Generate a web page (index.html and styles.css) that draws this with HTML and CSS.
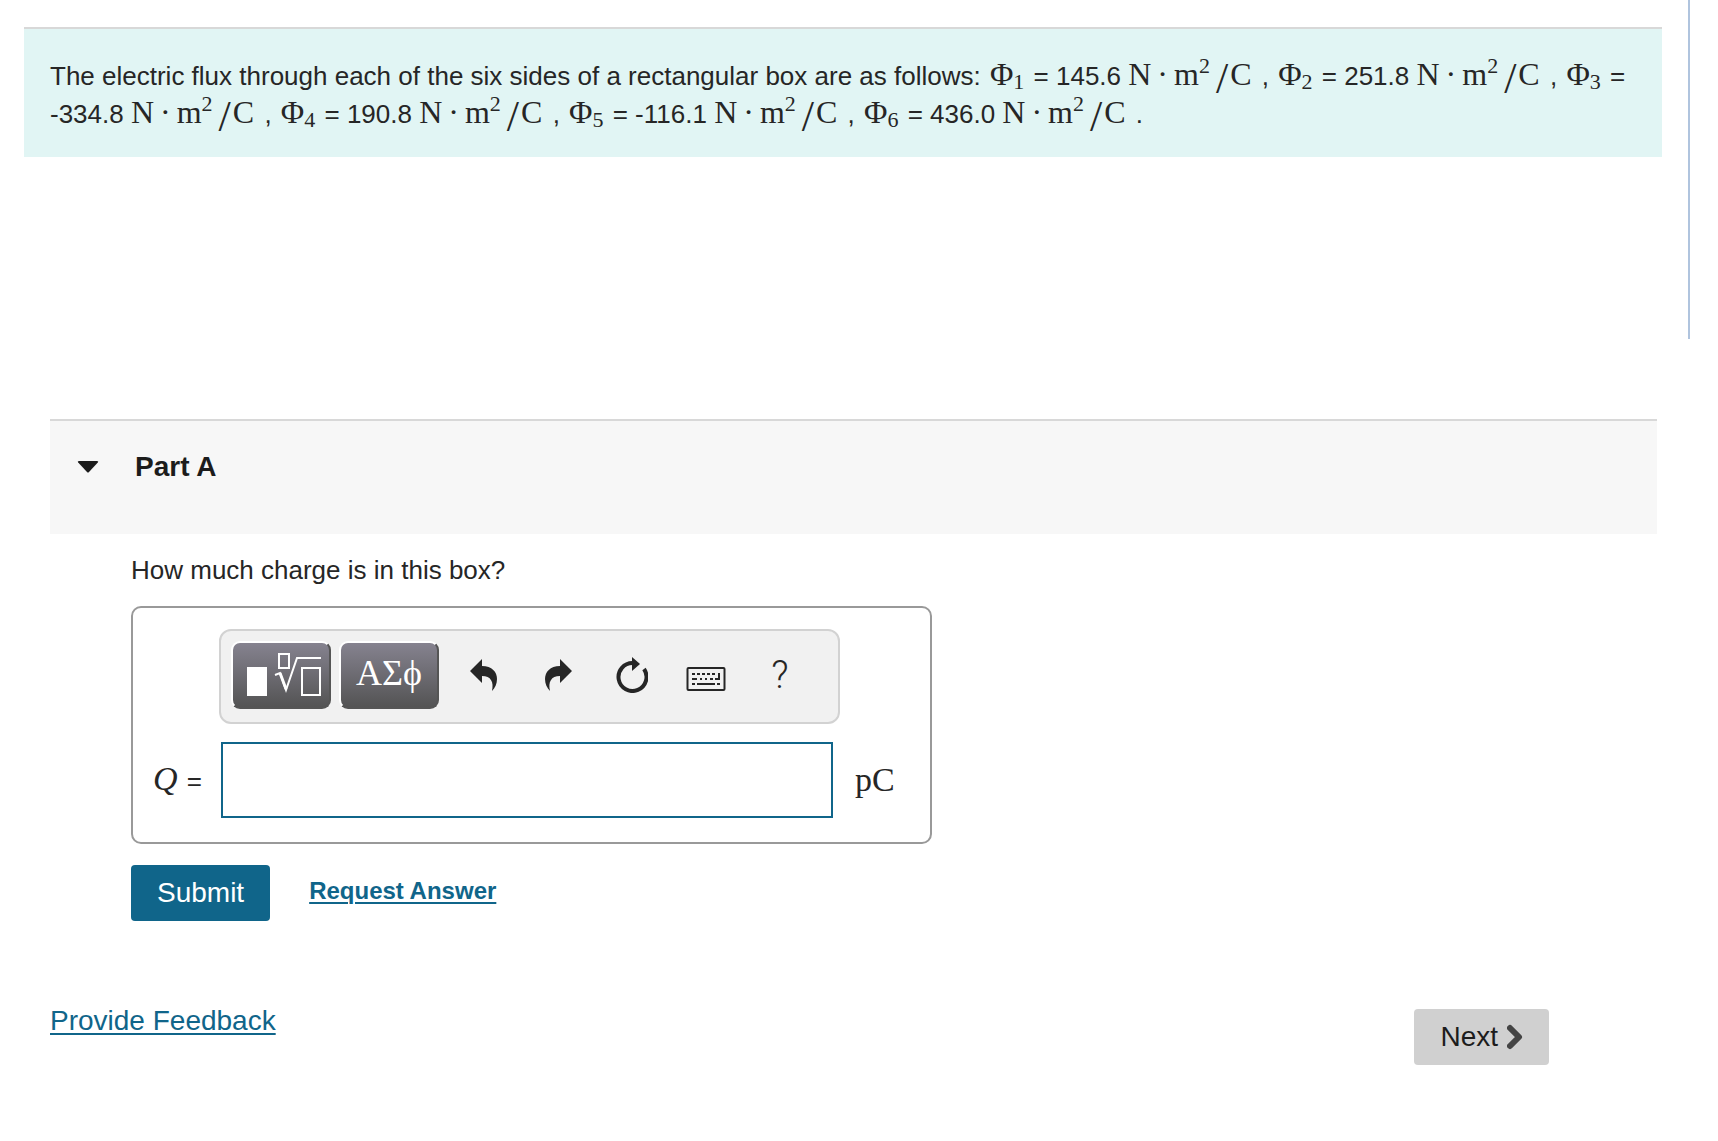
FILE: index.html
```
<!DOCTYPE html>
<html lang="en">
<head>
  <meta charset="UTF-8">
  <title>Electric Flux - Part A</title>
  <link rel="stylesheet" href="styles.css">
</head>
<body>
  <div class="intro">
    <p class="problem">
      The electric flux through each of the six sides of a rectangular box are as follows:
      <span class="math phi">Φ<sub>1</sub></span> = 145.6 <span class="math unit">N<i class="dot">·</i>m<sup>2</sup><i class="slash">/</i>C</span> ,
      <span class="math phi">Φ<sub>2</sub></span> = 251.8 <span class="math unit">N<i class="dot">·</i>m<sup>2</sup><i class="slash">/</i>C</span> ,
      <span class="math phi">Φ<sub>3</sub></span> = -334.8 <span class="math unit">N<i class="dot">·</i>m<sup>2</sup><i class="slash">/</i>C</span> ,
      <span class="math phi">Φ<sub>4</sub></span> = 190.8 <span class="math unit">N<i class="dot">·</i>m<sup>2</sup><i class="slash">/</i>C</span> ,
      <span class="math phi">Φ<sub>5</sub></span> = -116.1 <span class="math unit">N<i class="dot">·</i>m<sup>2</sup><i class="slash">/</i>C</span> ,
      <span class="math phi">Φ<sub>6</sub></span> = 436.0 <span class="math unit">N<i class="dot">·</i>m<sup>2</sup><i class="slash">/</i>C</span> .
    </p>
  </div>

  <main class="part">
    <div class="part-header">
      <svg class="caret" width="22" height="13" viewBox="0 0 22 13">
        <path d="M2 1h18q2 0 .8 1.500L12 12q-1 1-2 0L1.200 2.500Q0 1 2 1z"/>
      </svg>
      <h2>Part A</h2>
    </div>

    <div class="part-body">
      <p class="question">How much charge is in this box?</p>

      <div class="answer-box">
        <div class="toolbar">
          <button class="key" type="button" aria-label="Templates">
            <svg width="76" height="44" viewBox="0 0 76 44" fill="none" stroke="#fff">
              <rect x="4" y="16" width="20" height="29" fill="#fff" stroke="none"/>
              <rect x="36" y="3" width="10" height="14" stroke-width="2"/>
              <rect x="59" y="17" width="18" height="27" stroke-width="2"/>
              <path d="M32 24l5-2 6 17L54 7h24" stroke-width="2"/>
              <path d="M37 22l6 16" stroke-width="3"/>
            </svg>
          </button>
          <button class="key symbols" type="button">ΑΣϕ</button>
          <button class="tool" type="button" aria-label="Undo">
            <svg width="28" height="32" viewBox="0 0 28 32">
              <path d="M0 12L12 0v7c10 0 15 6 15 13 0 5-2 9-5 12 2-9-1-15-10-15v7z"/>
            </svg>
          </button>
          <button class="tool" type="button" aria-label="Redo">
            <svg width="28" height="32" viewBox="0 0 28 32">
              <path d="M28 12L16 0v7C6 7 1 13 1 20c0 5 2 9 5 12-2-9 1-15 10-15v7z"/>
            </svg>
          </button>
          <button class="tool" type="button" aria-label="Reset">
            <svg width="32" height="36" viewBox="0 0 32 36">
              <path d="M17 6a14 14 0 1 0 11 6" fill="none" stroke="#262626" stroke-width="4"/>
              <path d="M16 0l8 7-8 7z"/>
            </svg>
          </button>
          <button class="tool" type="button" aria-label="Keyboard shortcuts">
            <svg class="keyboard" width="40" height="24" viewBox="0 0 40 24">
              <rect x="1.500" y="1" width="37" height="22" rx="1" fill="none" stroke="#262626" stroke-width="2"/>
              <path d="M6 6h3v2H6zM11 6h3v2h-3zM16 6h3v2h-3zM21 6h3v2h-3zM26 6h3v2h-3zM32 6h2v7h-5v-2h3zM6 11h5v2H6zM14 11h2v2h-2zM19 11h2v2h-2zM24 11h3v2h-3zM6 16h3v2H6zM11 16h18v2H11zM31 16h3v2h-3z"/>
            </svg>
          </button>
          <button class="tool help" type="button" aria-label="Help">?</button>
        </div>

        <div class="answer-row">
          <label for="answer"><i class="var">Q</i> =</label>
          <input id="answer" class="answer" type="text">
          <span class="answer-unit">pC</span>
        </div>
      </div>

      <div class="actions">
        <button class="submit" type="button">Submit</button>
        <a class="request" href="#">Request Answer</a>
      </div>
    </div>
  </main>

  <footer class="footer">
    <a class="feedback" href="#">Provide Feedback</a>
    <button class="next" type="button">
      Next
      <svg width="16" height="26" viewBox="0 0 16 26">
        <path d="M3 4l9 9-9 9" fill="none" stroke="#444" stroke-width="6" stroke-linecap="round" stroke-linejoin="round"/>
      </svg>
    </button>
  </footer>
</body>
</html>
```
FILE: styles.css
```
* {
  box-sizing: border-box;
}

body {
  margin: 0;
  font-family: "Liberation Sans", Arial, sans-serif;
  font-size: 26px;
  line-height: 38px;
  color: #262626;
  background: #fff;
}

button {
  font-family: inherit;
  cursor: pointer;
}

a {
  color: #10658a;
  text-underline-offset: 3px;
  text-decoration-thickness: 2px;
}

/* Problem statement */
.intro {
  min-height: 339px;
  margin-right: 28px;
  padding: 27px 26px 0 24px;
  border-right: 2px solid #b0c4de;
}

.problem {
  margin: 0;
  padding: 28px 26px 24px;
  background: #e1f5f4;
  border-top: 2px solid #d8d8d8;
}

.math {
  display: inline-block;
  font-family: "Liberation Serif", "Times New Roman", serif;
  font-size: 32px;
  line-height: 30px;
  white-space: nowrap;
}

.phi {
  margin: 0 2px;
}

.unit {
  margin-right: 3px;
}

.math sub,
.math sup {
  font-size: 22px;
  line-height: 0;
}

.math sub {
  vertical-align: -4px;
}

.math sup {
  vertical-align: 12px;
}

.math i {
  font-style: normal;
}

.dot {
  margin: 0 6px;
}

.slash {
  margin: 0 2px 0 6px;
  font-size: 44px;
  line-height: 0;
  vertical-align: -8px;
}

/* Part */
.part {
  margin: 80px 61px 0 50px;
}

.part-header {
  display: flex;
  align-items: flex-start;
  gap: 36px;
  height: 115px;
  padding: 27px;
  background: #f7f7f7;
  border-top: 2px solid #d8d8d8;
  color: #1c1c1c;
}

.part-header h2 {
  margin: 0;
  font-size: 28px;
  line-height: 38px;
}

.caret {
  margin-top: 12px;
  fill: #1c1c1c;
}

.part-body {
  padding: 17px 0 0 81px;
}

.question {
  margin: 0 0 17px;
}

.answer-box {
  max-width: 801px;
  padding: 21px 20px 24px;
  border: 2px solid #999;
  border-radius: 10px;
}

/* Equation toolbar */
.toolbar {
  display: flex;
  align-items: center;
  width: 621px;
  height: 95px;
  margin-left: 66px;
  padding: 0 10px 3px;
  background: #f1f1f1;
  border: 2px solid #d2d2d2;
  border-radius: 12px;
}

.key {
  width: 100px;
  height: 68px;
  margin-right: 8px;
  padding: 0 0 4px;
  color: #fff;
  background: linear-gradient(#878491, #525252) border-box;
  border: 2px solid;
  border-color: #fff #555 #555 #fff;
  border-radius: 9px;
}

.key svg {
  display: block;
  margin: 0 auto;
  overflow: visible;
}

.symbols {
  font-family: "Liberation Serif", "Times New Roman", serif;
  font-size: 36px;
  line-height: 56px;
}

.tool {
  display: flex;
  align-items: center;
  justify-content: center;
  width: 74px;
  height: 68px;
  padding: 0;
  color: #262626;
  background: none;
  border: none;
}

.tool svg {
  fill: #262626;
}

.keyboard {
  margin-top: 8px;
}

.help {
  font-family: Roboto, sans-serif;
  font-size: 38px;
  font-weight: 300;
}

.answer-row {
  display: flex;
  align-items: center;
  margin-top: 18px;
}

.answer-row label {
  width: 68px;
}

.var {
  margin-right: 2px;
  font-family: "Liberation Serif", "Times New Roman", serif;
  font-size: 34px;
}

.answer {
  width: 612px;
  height: 76px;
  padding: 0 12px;
  font-size: 28px;
  border: 2px solid #10658a;
}

.answer-unit {
  margin-left: 22px;
  font-family: "Liberation Serif", "Times New Roman", serif;
  font-size: 34px;
}

/* Actions */
.actions {
  display: flex;
  align-items: center;
  gap: 39px;
  margin-top: 21px;
}

.submit,
.next {
  height: 56px;
  padding: 0 26px;
  font-size: 28px;
  border: none;
  border-radius: 4px;
}

.submit {
  color: #fff;
  background: #10658a;
}

.request {
  padding-bottom: 4px;
  font-size: 24px;
  font-weight: bold;
}

.footer {
  display: flex;
  align-items: flex-start;
  justify-content: space-between;
  margin: 81px 169px 0 50px;
}

.feedback {
  font-size: 28px;
}

.next {
  display: flex;
  align-items: center;
  gap: 9px;
  margin-top: 7px;
  color: #1c1c1c;
  background: #d0d0d0;
}
```
